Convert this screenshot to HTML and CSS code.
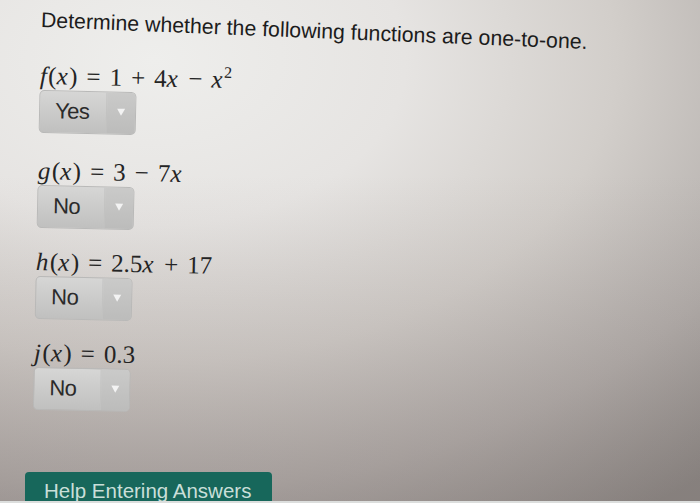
FILE: index.html
```html
<!DOCTYPE html>
<html>
<head>
<meta charset="utf-8">
<link rel="stylesheet" href="styles.css">
</head>
<body>
<div class="screen">
  <div class="content">
    <p class="prompt">Determine whether the following functions are one-to-one.</p>
    <div class="item">
      <div class="math"><i>f</i>(<i>x</i>)<span class="op">=</span>1<span class="op">+</span>4<i>x</i><span class="op">−</span><i>x</i><sup>2</sup></div>
      <div class="select"><span class="val">Yes</span><span class="arrow"><span class="tri"></span></span></div>
    </div>
    <div class="item">
      <div class="math"><i>g</i>(<i>x</i>)<span class="op">=</span>3<span class="op">−</span>7<i>x</i></div>
      <div class="select"><span class="val">No</span><span class="arrow"><span class="tri"></span></span></div>
    </div>
    <div class="item">
      <div class="math"><i>h</i>(<i>x</i>)<span class="op">=</span>2.5<i>x</i><span class="op">+</span>17</div>
      <div class="select"><span class="val">No</span><span class="arrow"><span class="tri"></span></span></div>
    </div>
    <div class="item">
      <div class="math"><i>j</i>(<i>x</i>)<span class="op">=</span>0.3</div>
      <div class="select"><span class="val">No</span><span class="arrow"><span class="tri"></span></span></div>
    </div>
  </div>
  <div class="help">Help Entering Answers</div>
</div>
<div class="strip"></div>
</body>
</html>
```
FILE: styles.css
```css
html, body {
  margin: 0;
  padding: 0;
}
body {
  width: 700px;
  height: 503px;
  overflow: hidden;
  display: flex;
  flex-direction: column;
  background: #dcdcdc;
}
.screen {
  flex: 1;
  overflow: hidden;
  display: flex;
  flex-direction: column;
  background:
    linear-gradient(180deg, rgba(125,112,110,0) 35%, rgba(125,112,110,0.28) 100%),
    radial-gradient(ellipse 120% 110% at 22% 12%, #eeeeec 0%, #e6e4e2 30%, #d2ceca 55%, #b3aeab 78%, #8a8683 100%);
}
.content {
  padding: 8px 0 0 41px;
  transform: rotate(1.2deg);
  transform-origin: 40px 20px;
}
.prompt {
  margin: 0 0 29px 0;
  font-family: "Liberation Sans", Arial, sans-serif;
  font-size: 21.3px;
  line-height: 24px;
  color: #1c1c1c;
  transform: rotate(1.1deg);
  transform-origin: 0 12px;
  white-space: nowrap;
}
.item {
  margin-bottom: 19px;
}
.item:first-of-type {
  margin-bottom: 23px;
}
.math {
  font-family: "Liberation Serif", "Times New Roman", serif;
  font-size: 25px;
  line-height: 30px;
  color: #242424;
  margin-bottom: -1px;
  white-space: nowrap;
}
.math i {
  padding-right: 1.5px;
}
.op {
  margin: 0 9px;
}
.math sup {
  font-size: 16px;
  line-height: 0;
  vertical-align: 10px;
}
.select {
  display: flex;
  width: 97px;
  height: 43px;
  border-radius: 5px;
  overflow: hidden;
  background: linear-gradient(#d6d6d5, #c0c0bf);
  border: 1px solid #b9b9b8;
  box-sizing: border-box;
}
.val {
  width: 67px;
  padding-left: 15px;
  box-sizing: border-box;
  font-family: "Liberation Sans", Arial, sans-serif;
  font-size: 22px;
  letter-spacing: -0.5px;
  line-height: 40px;
  color: #2b2b2b;
  border-right: 1px solid #c2c2c1;
}
.arrow {
  flex: 1;
  display: flex;
  align-items: center;
  justify-content: center;
  padding-bottom: 2px;
  background: linear-gradient(#cacac9, #bcbcbb);
}
.tri {
  width: 0;
  height: 0;
  border-left: 4px solid transparent;
  border-right: 4px solid transparent;
  border-top: 7px solid #f3f3f3;
}
.help {
  margin: auto 0 0 25px;
  width: 247px;
  height: 29px;
  background: #17675b;
  border-radius: 4px 4px 0 0;
  box-sizing: border-box;
  padding: 8px 0 0 19px;
  font-family: "Liberation Sans", Arial, sans-serif;
  font-size: 20.5px;
  line-height: 22px;
  color: #c9dfd9;
  white-space: nowrap;
  overflow: hidden;
}
.strip {
  height: 2px;
  background: #dcdedd;
}
```
